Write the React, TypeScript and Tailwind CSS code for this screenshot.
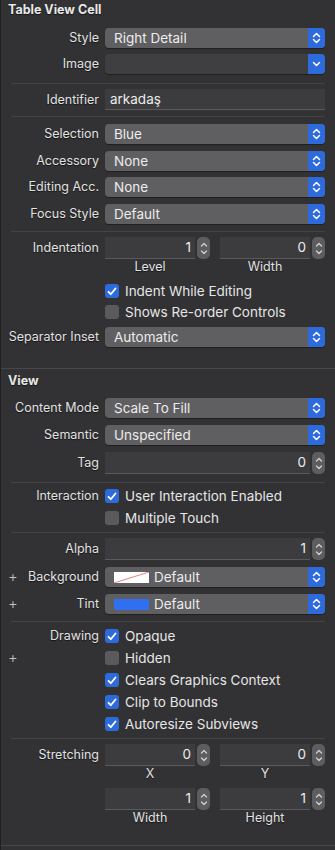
import React from 'react';

const FONT = { fontFamily: '"Inter", "Liberation Sans", sans-serif' };

function Separator({ full }: { full?: boolean }) {
  return <div className={full ? 'h-px bg-[#47474a]' : 'ml-[10px] mr-[10px] h-px bg-[#444446]'} />;
}

function Label({ children, tall }: { children?: React.ReactNode; tall?: boolean }) {
  return (
    <div className={`w-[91px] shrink-0 text-right text-[12.5px] leading-[16px] text-[#e2e2e2] [text-shadow:0_1px_1px_rgba(0,0,0,0.6)] whitespace-nowrap ${tall ? 'flex h-[22px] items-center justify-end' : ''}`}>
      {children}
    </div>
  );
}

function Row({ label, plus, top, className, children }: { label?: string; plus?: boolean; top?: boolean; className?: string; children?: React.ReactNode }) {
  return (
    <div className={`relative flex pl-[7px] pr-[10px] ${top ? 'items-start' : 'items-center'} ${className ?? ''}`}>
      {plus && <span className="absolute left-[7px] text-[15px] font-light leading-[16px] text-[#c4c4c4]">+</span>}
      <Label tall={top}>{label}</Label>
      <div className="ml-[6px] flex-1 min-w-0">{children}</div>
    </div>
  );
}

function UpDown() {
  return (
    <svg width="9" height="12" viewBox="0 0 9 12" fill="none" stroke="white" strokeWidth="1.5" strokeLinecap="round" strokeLinejoin="round">
      <path d="M1.5 4.5 L4.5 1.5 L7.5 4.5" />
      <path d="M1.5 7.5 L4.5 10.5 L7.5 7.5" />
    </svg>
  );
}

function Popup({ value, swatch, dark, down }: { value?: string; swatch?: 'clear' | 'blue'; dark?: boolean; down?: boolean }) {
  return (
    <div className={`flex h-[20px] items-stretch rounded-[4px] ${dark ? 'bg-[#3f3f41]' : 'bg-[#5f5f61]'} shadow-[0_1px_1px_rgba(0,0,0,0.4)]`}>
      <div className="flex flex-1 items-center gap-[5px] pl-[9px] text-[13.5px] text-[#ececec]">
        {swatch === 'clear' && (
          <svg width="35" height="11" viewBox="0 0 35 11">
            <rect x="0" y="0" width="35" height="11" fill="white" />
            <line x1="0" y1="11" x2="35" y2="0" stroke="#e06060" strokeWidth="0.8" />
          </svg>
        )}
        {swatch === 'blue' && <div className="h-[11px] w-[35px] bg-[#2f6ff0]" />}
        {value}
      </div>
      <div className="flex w-[17px] items-center justify-center rounded-r-[4px] bg-[#2d6bdc]">
        {down ? (
          <svg width="9" height="6" viewBox="0 0 9 6" fill="none" stroke="white" strokeWidth="1.5" strokeLinecap="round" strokeLinejoin="round">
            <path d="M1.5 1.5 L4.5 4.5 L7.5 1.5" />
          </svg>
        ) : (
          <UpDown />
        )}
      </div>
    </div>
  );
}

function Stepper() {
  return (
    <div className="flex h-[22px] w-[13px] shrink-0 items-center justify-center rounded-[5px] bg-[#5d5d5f]">
      <svg width="8" height="15" viewBox="0 0 8 15" fill="none" stroke="#d0d0d0" strokeWidth="1.3" strokeLinecap="round" strokeLinejoin="round">
        <path d="M1.5 5 L4 2.5 L6.5 5" />
        <path d="M1.5 10 L4 12.5 L6.5 10" />
      </svg>
    </div>
  );
}

function Field({ value, left, className }: { value: string; left?: boolean; className?: string }) {
  return (
    <div className={`flex items-center border-b border-[#5a5a5c] bg-[#3c3c3e] text-[13.5px] text-[#ececec] ${left ? 'h-[21px] justify-start pl-[5px]' : 'h-[22px] justify-end pr-[4px]'} ${className ?? ''}`}>
      {value}
    </div>
  );
}

function NumberField({ value }: { value: string }) {
  return (
    <div className="flex items-center gap-[2px]">
      <Field value={value} className="flex-1" />
      <Stepper />
    </div>
  );
}

function SubLabel({ children }: { children: React.ReactNode }) {
  return (
    <div className="pr-[15px] text-center text-[12.5px] leading-[15px] text-[#e2e2e2] [text-shadow:0_1px_1px_rgba(0,0,0,0.6)]">
      {children}
    </div>
  );
}

function Pair({ a, b, la, lb }: { a: string; b: string; la: string; lb: string }) {
  return (
    <div className="grid grid-cols-2 gap-[10px]">
      <div>
        <NumberField value={a} />
        <SubLabel>{la}</SubLabel>
      </div>
      <div>
        <NumberField value={b} />
        <SubLabel>{lb}</SubLabel>
      </div>
    </div>
  );
}

function Check({ checked, label }: { checked?: boolean; label: string }) {
  return (
    <div className="flex h-[16px] items-center gap-[6px]">
      <div className={`flex h-[14px] w-[14px] shrink-0 items-center justify-center rounded-[3px] ${checked ? 'bg-[#2d6bdc]' : 'bg-[#5a5a5c]'}`}>
        {checked && (
          <svg width="10" height="9" viewBox="0 0 10 9" fill="none" stroke="white" strokeWidth="1.8" strokeLinecap="round" strokeLinejoin="round">
            <path d="M1.5 4.8 L3.8 7.2 L8.5 1.5" />
          </svg>
        )}
      </div>
      <span className="text-[13.5px] leading-[16px] text-[#e6e6e6] whitespace-nowrap">{label}</span>
    </div>
  );
}

function Header({ children, className }: { children: React.ReactNode; className?: string }) {
  return (
    <div className={`pl-[7px] text-[12.5px] font-bold leading-[16px] text-[#e8e8e8] [text-shadow:0_1px_1px_rgba(0,0,0,0.6)] ${className ?? ''}`}>
      {children}
    </div>
  );
}

export default function App() {
  return (
    <div style={FONT} className="h-[850px] w-[335px] overflow-hidden border-l border-[#1f1f21] bg-[#323234]">
      {/* Table View Cell */}
      <Header className="pt-[2px]">Table View Cell</Header>
      <Row label="Style" className="mt-[10px]"><Popup value="Right Detail" /></Row>
      <Row label="Image" className="mt-[6px]"><Popup dark down /></Row>
      <div className="mt-[9px]"><Separator /></div>
      <Row label="Identifier" className="mt-[5px]"><Field value="arkadaş" left /></Row>
      <div className="mt-[6px]"><Separator /></div>
      <Row label="Selection" className="mt-[7px]"><Popup value="Blue" /></Row>
      <Row label="Accessory" className="mt-[7px]"><Popup value="None" /></Row>
      <Row label="Editing Acc." className="mt-[6px]"><Popup value="None" /></Row>
      <Row label="Focus Style" className="mt-[7px]"><Popup value="Default" /></Row>
      <div className="mt-[7px]"><Separator /></div>
      <Row label="Indentation" top className="mt-[5px]"><Pair a="1" b="0" la="Level" lb="Width" /></Row>
      <Row className="mt-[9px]"><Check checked label="Indent While Editing" /></Row>
      <Row className="mt-[5px]"><Check label="Shows Re-order Controls" /></Row>
      <Row label="Separator Inset" className="mt-[7px]"><Popup value="Automatic" /></Row>
      <div className="mt-[21px]"><Separator full /></div>

      {/* View */}
      <Header className="mt-[4px]">View</Header>
      <Row label="Content Mode" className="mt-[9px]"><Popup value="Scale To Fill" /></Row>
      <Row label="Semantic" className="mt-[7px]"><Popup value="Unspecified" /></Row>
      <Row label="Tag" className="mt-[7px]"><NumberField value="0" /></Row>
      <div className="mt-[8px]"><Separator /></div>
      <Row label="Interaction" className="mt-[5px]"><Check checked label="User Interaction Enabled" /></Row>
      <Row className="mt-[6px]"><Check label="Multiple Touch" /></Row>
      <div className="mt-[6px]"><Separator /></div>
      <Row label="Alpha" className="mt-[5px]"><NumberField value="1" /></Row>
      <Row label="Background" plus className="mt-[7px]"><Popup value="Default" swatch="clear" /></Row>
      <Row label="Tint" plus className="mt-[7px]"><Popup value="Default" swatch="blue" /></Row>
      <div className="mt-[7px]"><Separator /></div>
      <Row label="Drawing" className="mt-[6px]"><Check checked label="Opaque" /></Row>
      <Row plus className="mt-[6px]"><Check label="Hidden" /></Row>
      <Row className="mt-[6px]"><Check checked label="Clears Graphics Context" /></Row>
      <Row className="mt-[6px]"><Check checked label="Clip to Bounds" /></Row>
      <Row className="mt-[6px]"><Check checked label="Autoresize Subviews" /></Row>
      <div className="mt-[6px]"><Separator /></div>
      <Row label="Stretching" top className="mt-[5px]"><Pair a="0" b="0" la="X" lb="Y" /></Row>
      <Row top className="mt-[7px]"><Pair a="1" b="1" la="Width" lb="Height" /></Row>
      <div className="mt-[20px]"><Separator full /></div>
    </div>
  );
}
